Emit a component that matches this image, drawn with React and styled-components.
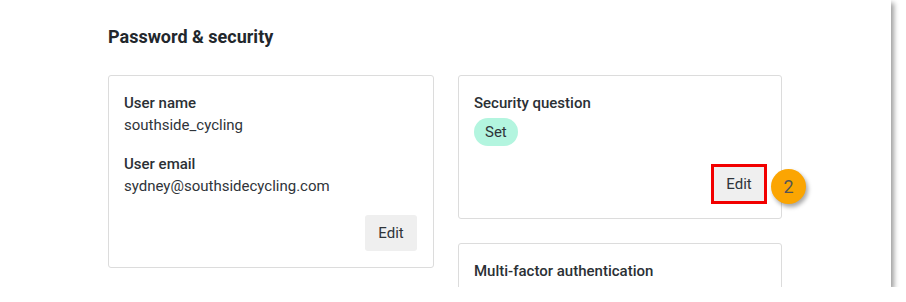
import React from "react";
import styled, { createGlobalStyle } from "styled-components";

const GlobalStyle = createGlobalStyle`
  html, body {
    margin: 0;
    padding: 0;
    background: #ffffff;
  }
  body {
    font-family: Roboto, "Liberation Sans", Arial, sans-serif;
    color: #2f3439;
  }
`;

const Frame = styled.div`
  width: 891px;
  height: 287px;
  overflow: hidden;
  background: #ffffff;
  box-shadow: 3px 3px 5px rgba(0, 0, 0, 0.38);
  box-sizing: border-box;
  padding: 26px 0 0 108px;
`;

const Heading = styled.h2`
  margin: 0 0 27px;
  font-size: 18px;
  line-height: 22px;
  font-weight: 700;
  color: #22272c;
`;

const Grid = styled.div`
  display: grid;
  grid-template-columns: 326px 324px;
  column-gap: 24px;
  align-items: start;
`;

const Column = styled.div`
  display: flex;
  flex-direction: column;
  gap: 24px;
`;

const Card = styled.div`
  border: 1px solid #dcdcdc;
  border-radius: 3px;
  padding: 16px 16px 16px 15px;
  display: flex;
  flex-direction: column;
  background: #fff;
`;

const Field = styled.div`
  display: flex;
  flex-direction: column;
  align-items: flex-start;
  & + & {
    margin-top: 17px;
  }
`;

const Label = styled.div`
  font-size: 15px;
  line-height: 22px;
  font-weight: 500;
  color: #2b3035;
`;

const Value = styled.div`
  font-size: 15px;
  line-height: 22px;
  color: #2f3439;
`;

const Pill = styled.span`
  margin-top: 4px;
  display: inline-flex;
  align-items: center;
  justify-content: center;
  height: 28px;
  padding: 0 11px;
  border-radius: 14px;
  background: #b3f5df;
  font-size: 15px;
  color: #2f3439;
`;

const Actions = styled.div`
  display: flex;
  justify-content: flex-end;
  margin-top: ${(p) => p.$gap}px;
`;

const EditButton = styled.button`
  position: relative;
  width: 52px;
  height: 36px;
  border: none;
  border-radius: 3px;
  background: #efefef;
  font-family: Roboto, "Liberation Sans", Arial, sans-serif;
  font-size: 15px;
  color: #2f3439;
  cursor: pointer;
  ${(p) =>
    p.$highlight &&
    `
    border-radius: 0;
    outline: 3px solid #f20000;
    outline-offset: -1px;
  `}
`;

const StepBadge = styled.span`
  position: absolute;
  left: 58px;
  top: 3px;
  width: 35px;
  height: 35px;
  border-radius: 50%;
  background: #fba502;
  box-shadow: 2px 3px 4px rgba(0, 0, 0, 0.35);
  display: flex;
  align-items: center;
  justify-content: center;
  font-size: 18px;
  color: #555555;
  font-weight: 400;
`;

export default function App() {
  return (
    <>
      <GlobalStyle />
      <Frame>
        <Heading>Password &amp; security</Heading>
        <Grid>
          <Card>
            <Field>
              <Label>User name</Label>
              <Value>southside_cycling</Value>
            </Field>
            <Field>
              <Label>User email</Label>
              <Value>sydney@southsidecycling.com</Value>
            </Field>
            <Actions $gap={18}>
              <EditButton>Edit</EditButton>
            </Actions>
          </Card>
          <Column>
            <Card>
              <Field>
                <Label>Security question</Label>
                <Pill>Set</Pill>
              </Field>
              <Actions $gap={20}>
                <EditButton $highlight>
                  Edit
                  <StepBadge>2</StepBadge>
                </EditButton>
              </Actions>
            </Card>
            <Card>
              <Field>
                <Label>Multi-factor authentication</Label>
                <Value>&nbsp;</Value>
              </Field>
            </Card>
          </Column>
        </Grid>
      </Frame>
    </>
  );
}
